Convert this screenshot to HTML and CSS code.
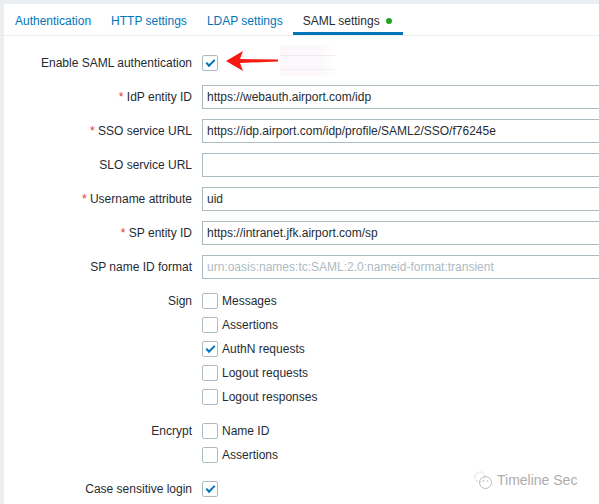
FILE: index.html
```html
<!DOCTYPE html>
<html>
<head>
<meta charset="utf-8">
<link rel="stylesheet" href="styles.css">
</head>
<body>
<div class="panel">
  <nav class="tabs">
    <a class="tab">Authentication</a>
    <a class="tab">HTTP settings</a>
    <a class="tab">LDAP settings</a>
    <a class="tab active">SAML settings<span class="dot"></span></a>
  </nav>
  <form class="form">
    <label class="lbl">Enable SAML authentication</label>
    <div class="ctl"><span class="cb checked"></span></div>

    <label class="lbl"><span class="req">*</span> IdP entity ID</label>
    <div class="ctl"><input class="txt" value="https://webauth.airport.com/idp"></div>

    <label class="lbl"><span class="req">*</span> SSO service URL</label>
    <div class="ctl"><input class="txt" value="https://idp.airport.com/idp/profile/SAML2/SSO/f76245e"></div>

    <label class="lbl">SLO service URL</label>
    <div class="ctl"><input class="txt" value=""></div>

    <label class="lbl"><span class="req">*</span> Username attribute</label>
    <div class="ctl"><input class="txt" value="uid"></div>

    <label class="lbl"><span class="req">*</span> SP entity ID</label>
    <div class="ctl"><input class="txt" value="https://intranet.jfk.airport.com/sp"></div>

    <label class="lbl">SP name ID format</label>
    <div class="ctl"><input class="txt" placeholder="urn:oasis:names:tc:SAML:2.0:nameid-format:transient"></div>

    <label class="lbl">Sign</label>
    <ul class="list">
      <li><span class="cb"></span>Messages</li>
      <li><span class="cb"></span>Assertions</li>
      <li><span class="cb checked"></span>AuthN requests</li>
      <li><span class="cb"></span>Logout requests</li>
      <li><span class="cb"></span>Logout responses</li>
    </ul>

    <label class="lbl">Encrypt</label>
    <ul class="list">
      <li><span class="cb"></span>Name ID</li>
      <li><span class="cb"></span>Assertions</li>
    </ul>

    <label class="lbl">Case sensitive login</label>
    <div class="ctl"><span class="cb checked"></span></div>
  </form>
</div>

<svg class="arrow" width="60" height="24" viewBox="0 0 60 24">
  <path d="M0 10 L17 0 L14 8 L52 8.5 L52 10.5 L14 12 L17 20 Z" fill="#f61a14"/>
</svg>
<div class="redact"></div>

<div class="watermark">
  <svg width="20" height="20" viewBox="0 0 20 20" class="wm-icon">
    <circle cx="7" cy="7" r="5" fill="none" stroke="#cfcfcf" stroke-width="1" stroke-dasharray="2 1.2"/>
    <circle cx="12.5" cy="12.5" r="6" fill="none" stroke="#bdbdbd" stroke-width="1"/>
    <circle cx="10.5" cy="11" r="0.8" fill="#bdbdbd"/>
    <circle cx="14.5" cy="11" r="0.8" fill="#bdbdbd"/>
  </svg>
  <span>Timeline Sec</span>
</div>
</body>
</html>
```
FILE: styles.css
```css
html, body {
  margin: 0;
  padding: 0;
  overflow: hidden;
}
body {
  background: #ebeef0;
  font-family: "Liberation Sans", Arial, sans-serif;
  font-size: 12px;
  color: #1f2c33;
  width: 599px;
  height: 504px;
  position: relative;
}
.panel {
  margin: 4px 0 0 4px;
  background: #fff;
  height: 500px;
}
.tabs {
  display: flex;
  height: 31px;
  border-bottom: 1px solid #ebeef0;
  padding-left: 1px;
}
.tab {
  display: flex;
  align-items: center;
  padding: 2px 10px 0;
  color: #0275b8;
  box-sizing: border-box;
  height: 31px;
}
.tab.active {
  color: #1f2c33;
  border-bottom: 3px solid #0275b8;
  padding-top: 5px;
  padding-right: 11px;
}
.dot {
  display: inline-block;
  width: 6px;
  height: 6px;
  border-radius: 50%;
  background: #1fa51f;
  margin-left: 6px;
}
.form {
  display: grid;
  grid-template-columns: 188px 1fr;
  column-gap: 10px;
  row-gap: 10px;
  padding-top: 15px;
  margin: 0;
}
.lbl {
  text-align: right;
  line-height: 24px;
  height: 24px;
  white-space: nowrap;
}
.req {
  color: #e33734;
}
.ctl {
  height: 24px;
  display: flex;
  align-items: center;
  min-width: 0;
}
.txt {
  box-sizing: border-box;
  width: 100%;
  height: 24px;
  border: 1px solid #acbbc2;
  border-right: 0;
  border-radius: 0;
  padding: 0 4px;
  font-family: "Liberation Sans", Arial, sans-serif;
  font-size: 12px;
  color: #1f2c33;
  background: #fff;
  outline: none;
}
.txt::placeholder {
  color: #acbbc2;
}
.cb {
  box-sizing: border-box;
  display: inline-block;
  width: 16px;
  height: 16px;
  border: 1px solid #acbbc2;
  border-radius: 2px;
  background: #fff;
  position: relative;
  flex: none;
}
.cb.checked::after {
  content: "";
  position: absolute;
  left: 3px;
  top: 2px;
  width: 7px;
  height: 3px;
  border-left: 2px solid #0275b8;
  border-bottom: 2px solid #0275b8;
  transform: translate(0, 1.5px) rotate(-45deg);
}
.list {
  list-style: none;
  margin: 0;
  padding: 0;
}
.list li {
  display: flex;
  align-items: center;
  height: 24px;
  gap: 4px;
}
.arrow {
  position: absolute;
  left: 226px;
  top: 51px;
}
.redact {
  position: absolute;
  left: 280px;
  top: 45px;
  width: 55px;
  height: 31px;
  background:
    linear-gradient(to bottom, transparent 0, transparent 10px, rgba(230,225,232,0.6) 10px, rgba(230,225,232,0.6) 11px, transparent 11px, transparent 24px, rgba(230,225,232,0.5) 24px, rgba(230,225,232,0.5) 25px, transparent 25px),
    linear-gradient(to right, rgba(252,246,250,0.9), rgba(250,244,248,0.7) 70%, rgba(255,255,255,0));
}
.watermark {
  position: absolute;
  left: 473px;
  top: 470px;
  display: flex;
  align-items: center;
  gap: 4px;
  color: #adadad;
  font-size: 14px;
  font-family: "Liberation Sans", Arial, sans-serif;
}
.wm-icon {
  flex: none;
}
```
